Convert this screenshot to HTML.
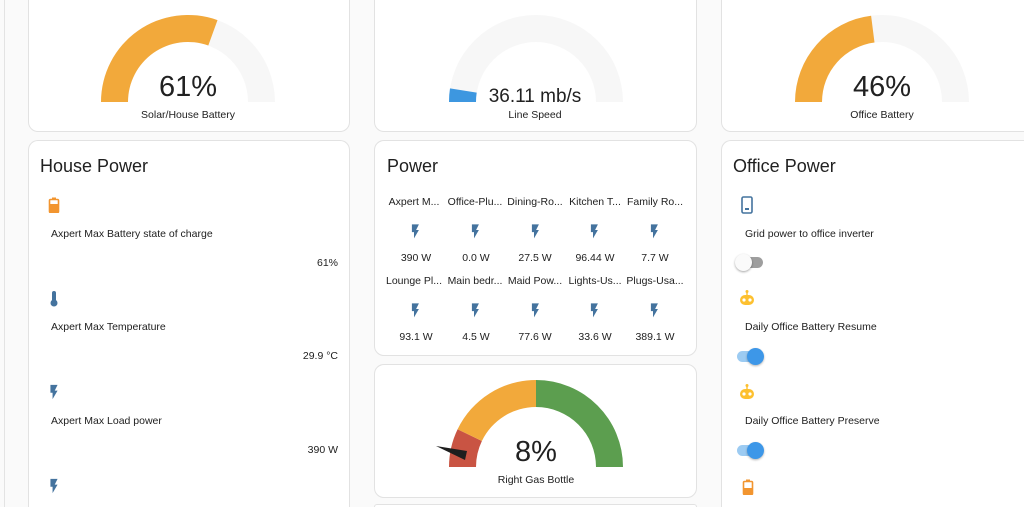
<!DOCTYPE html>
<html style="width:1024px;height:507px;overflow:hidden"><head><meta charset="utf-8"><style>
*{box-sizing:border-box;margin:0;padding:0}
body{width:1024px;height:507px;overflow:hidden;background:#fafafa;font-family:"Liberation Sans",Roboto,sans-serif;color:#212121;position:relative}
.vl{position:absolute;left:4px;top:0;width:1px;height:507px;background:#e3e3e3}
.card{position:absolute;background:#fff;border:1px solid #e2e2e2;border-radius:10px}
.tc{top:0;height:132px;border-top:none;border-top-left-radius:0;border-top-right-radius:0}
.bc{height:367px;border-bottom:none;border-bottom-left-radius:0;border-bottom-right-radius:0}
.t{position:absolute;font-size:18px;color:#212121}
.s{position:absolute;font-size:10.5px;color:#212121;white-space:nowrap}
.c{transform:translateX(-50%)}
.tg{position:absolute;width:26px;height:11px;border-radius:6px}
.tg i{position:absolute;top:-3px;width:17px;height:17px;border-radius:50%}
svg{position:absolute}
</style></head><body>
<div class="vl"></div>
<div class="card tc" style="left:28px;width:322px"></div>
<div class="card tc" style="left:374px;width:323px"></div>
<div class="card tc" style="left:721px;width:303px;border-right:none;border-radius:0 0 0 10px"></div>
<svg width="1024" height="140" style="left:0;top:0">
<g fill="#f7f7f7">
<path d="M101,102 A87,87 0 0 1 275,102 L248,102 A60,60 0 0 0 128,102Z"/>
<path d="M449,102 A87,87 0 0 1 623,102 L596,102 A60,60 0 0 0 476,102Z"/>
<path d="M795,102 A87,87 0 0 1 969,102 L942,102 A60,60 0 0 0 822,102Z"/>
</g>
<path d="M101,102 A87,87 0 0 1 217.5,20.1 L208.3,45.5 A60,60 0 0 0 128,102Z" fill="#f2a93b"/>
<path d="M449,102 A87,87 0 0 1 450,88.4 L476.7,92.6 A60,60 0 0 0 476,102Z" fill="#3d97e0"/>
<path d="M795,102 A87,87 0 0 1 871.1,15.7 L874.5,42.5 A60,60 0 0 0 822,102Z" fill="#f2a93b"/>
</svg>
<div class="s c" style="left:188px;top:71px;font-size:29px">61%</div>
<div class="s c" style="left:188px;top:109px">Solar/House Battery</div>
<div class="s c" style="left:535px;top:86px;font-size:19px">36.11 mb/s</div>
<div class="s c" style="left:535px;top:109px">Line Speed</div>
<div class="s c" style="left:882px;top:71px;font-size:29px">46%</div>
<div class="s c" style="left:882px;top:109px">Office Battery</div>

<div class="card bc" style="left:28px;top:140px;width:322px"></div>
<div class="t" style="left:40px;top:156px">House Power</div>
<svg width="12" height="16" style="left:48px;top:197px" viewBox="0 0 12 16"><rect x="1.5" y="2.5" width="9" height="13" rx="1" fill="none" stroke="#f2952f" stroke-width="1.6"/><rect x="4" y="0.5" width="4" height="2" fill="#f2952f"/><rect x="2" y="7" width="8" height="8" fill="#f2952f"/></svg>
<div class="s" style="left:51px;top:228px">Axpert Max Battery state of charge</div>
<div class="s" style="right:686px;top:257px">61%</div>
<svg width="10" height="16" style="left:49px;top:291px" viewBox="0 0 10 16"><rect x="3" y="0" width="4" height="11" rx="2" fill="#44739e"/><circle cx="5" cy="12" r="3.5" fill="#44739e"/></svg>
<div class="s" style="left:51px;top:321px">Axpert Max Temperature</div>
<div class="s" style="right:686px;top:350px">29.9 °C</div>
<svg width="10" height="16" style="left:49px;top:384px" viewBox="5 1 14 22"><path d="M7,2V13H10V22L17,10H13L17,2H7Z" fill="#44739e"/></svg>
<div class="s" style="left:51px;top:415px">Axpert Max Load power</div>
<div class="s" style="right:686px;top:444px">390 W</div>
<svg width="10" height="16" style="left:49px;top:478px" viewBox="5 1 14 22"><path d="M7,2V13H10V22L17,10H13L17,2H7Z" fill="#44739e"/></svg>

<div class="card" style="left:374px;top:140px;width:323px;height:216px"></div>
<div class="t" style="left:387px;top:156px">Power</div>
<div class="s c" style="left:414px;top:196px">Axpert M...</div>
<div class="s c" style="left:475px;top:196px">Office-Plu...</div>
<div class="s c" style="left:535px;top:196px">Dining-Ro...</div>
<div class="s c" style="left:595px;top:196px">Kitchen T...</div>
<div class="s c" style="left:655px;top:196px">Family Ro...</div>
<div class="s c" style="left:416px;top:252px">390 W</div>
<div class="s c" style="left:476px;top:252px">0.0 W</div>
<div class="s c" style="left:535px;top:252px">27.5 W</div>
<div class="s c" style="left:595px;top:252px">96.44 W</div>
<div class="s c" style="left:655px;top:252px">7.7 W</div>
<div class="s c" style="left:414px;top:275px">Lounge Pl...</div>
<div class="s c" style="left:475px;top:275px">Main bedr...</div>
<div class="s c" style="left:535px;top:275px">Maid Pow...</div>
<div class="s c" style="left:595px;top:275px">Lights-Us...</div>
<div class="s c" style="left:655px;top:275px">Plugs-Usa...</div>
<div class="s c" style="left:416px;top:331px">93.1 W</div>
<div class="s c" style="left:476px;top:331px">4.5 W</div>
<div class="s c" style="left:535px;top:331px">77.6 W</div>
<div class="s c" style="left:595px;top:331px">33.6 W</div>
<div class="s c" style="left:655px;top:331px">389.1 W</div>
<svg width="1024" height="340" style="left:0;top:0" viewBox="0 0 1024 340">
<defs><path id="f" d="M7,2V13H10V22L17,10H13L17,2H7Z" fill="#44739e" transform="translate(-5,-1) scale(0.7)"/></defs>
<g transform="translate(412,224)"><use href="#f"/></g>
<g transform="translate(472,224)"><use href="#f"/></g>
<g transform="translate(532,224)"><use href="#f"/></g>
<g transform="translate(591,224)"><use href="#f"/></g>
<g transform="translate(651,224)"><use href="#f"/></g>
<g transform="translate(412,303)"><use href="#f"/></g>
<g transform="translate(472,303)"><use href="#f"/></g>
<g transform="translate(532,303)"><use href="#f"/></g>
<g transform="translate(591,303)"><use href="#f"/></g>
<g transform="translate(651,303)"><use href="#f"/></g>
</svg>

<div class="card" style="left:374px;top:364px;width:323px;height:134px"></div>
<div class="card" style="left:374px;top:504px;width:323px;height:3px;border-bottom:none;border-radius:3px 3px 0 0"></div>
<svg width="1024" height="507" style="left:0;top:0">
<path d="M449,467 A87,87 0 0 1 457.6,429.3 L481.9,441 A60,60 0 0 0 476,467Z" fill="#c95443"/>
<path d="M457.6,429.3 A87,87 0 0 1 536,380 L536,407 A60,60 0 0 0 481.9,441Z" fill="#f2a93b"/>
<path d="M536,380 A87,87 0 0 1 623,467 L596,467 A60,60 0 0 0 536,407Z" fill="#5c9e4f"/>
<path d="M436,446 L467,451 L465,460Z" fill="#1e1e1e"/>
</svg>
<div class="s c" style="left:536px;top:436px;font-size:29px">8%</div>
<div class="s c" style="left:536px;top:474px">Right Gas Bottle</div>

<div class="card bc" style="left:721px;top:140px;width:303px;border-right:none;border-radius:10px 0 0 0"></div>
<div class="t" style="left:733px;top:156px">Office Power</div>
<svg width="12" height="18" style="left:741px;top:196px" viewBox="0 0 12 18"><rect x="1" y="1" width="10" height="16" rx="1.5" fill="none" stroke="#44739e" stroke-width="1.6"/><rect x="4" y="12" width="4" height="2" fill="#44739e"/></svg>
<div class="s" style="left:745px;top:228px">Grid power to office inverter</div>
<div class="tg" style="left:737px;top:257px;background:#9e9e9e"><i style="left:-2px;background:#fafafa;box-shadow:0 1px 2px rgba(0,0,0,.35)"></i></div>
<svg width="18" height="16" style="left:738px;top:290px" viewBox="0 0 18 16"><circle cx="9" cy="1.5" r="1.5" fill="#fdc02f"/><rect x="8.3" y="2" width="1.4" height="3" fill="#fdc02f"/><rect x="2" y="5" width="14" height="10" rx="5" fill="#fdc02f"/><circle cx="6" cy="10" r="1.6" fill="#fff"/><circle cx="12" cy="10" r="1.6" fill="#fff"/></svg>
<div class="s" style="left:745px;top:321px">Daily Office Battery Resume</div>
<div class="tg" style="left:737px;top:351px;background:#9ccbf2"><i style="left:10px;background:#3d97e8;box-shadow:0 1px 2px rgba(0,0,0,.3)"></i></div>
<svg width="18" height="16" style="left:738px;top:384px" viewBox="0 0 18 16"><circle cx="9" cy="1.5" r="1.5" fill="#fdc02f"/><rect x="8.3" y="2" width="1.4" height="3" fill="#fdc02f"/><rect x="2" y="5" width="14" height="10" rx="5" fill="#fdc02f"/><circle cx="6" cy="10" r="1.6" fill="#fff"/><circle cx="12" cy="10" r="1.6" fill="#fff"/></svg>
<div class="s" style="left:745px;top:415px">Daily Office Battery Preserve</div>
<div class="tg" style="left:737px;top:445px;background:#9ccbf2"><i style="left:10px;background:#3d97e8;box-shadow:0 1px 2px rgba(0,0,0,.3)"></i></div>
<svg width="12" height="16" style="left:742px;top:479px" viewBox="0 0 12 16"><rect x="1.5" y="2.5" width="9" height="13" rx="1" fill="none" stroke="#f2952f" stroke-width="1.6"/><rect x="4" y="0.5" width="4" height="2" fill="#f2952f"/><rect x="2" y="9" width="8" height="6" fill="#f2952f"/></svg>
</body></html>
